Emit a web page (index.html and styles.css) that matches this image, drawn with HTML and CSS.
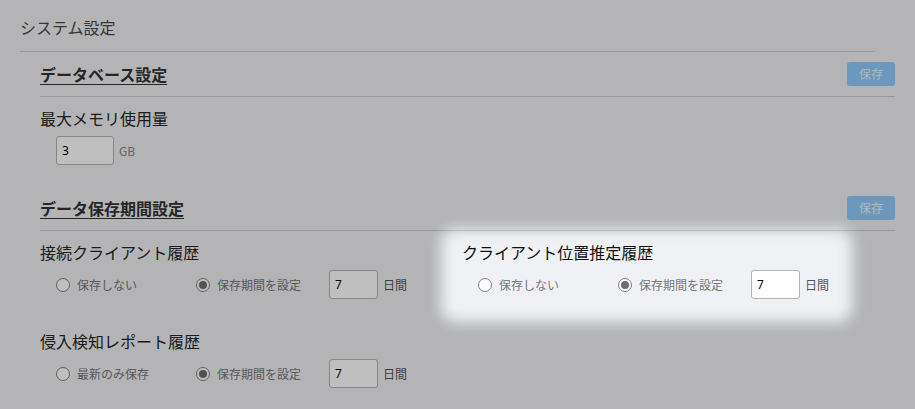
FILE: index.html
```html
<!DOCTYPE html>
<html lang="ja">
<head>
<meta charset="utf-8">
<title>システム設定</title>
<link rel="stylesheet" href="styles.css">
</head>
<body>
<div class="page">
  <div class="title">システム設定</div>

  <section class="section">
    <div class="sec-head">
      <h2 class="sec-title">データベース設定</h2>
      <button class="save" type="button">保存</button>
    </div>
    <div class="group">
      <div class="label">最大メモリ使用量</div>
      <div class="row">
        <input class="num num-wide" type="text" value="3">
        <span class="unit unit-light">GB</span>
      </div>
    </div>
  </section>

  <section class="section">
    <div class="sec-head">
      <h2 class="sec-title">データ保存期間設定</h2>
      <button class="save" type="button">保存</button>
    </div>
    <div class="cols">
      <div class="group">
        <div class="label">接続クライアント履歴</div>
        <div class="row">
          <label class="opt opt-1"><input class="radio" type="radio" name="r1"><span>保存しない</span></label>
          <label class="opt opt-2"><input class="radio" type="radio" name="r1" checked><span>保存期間を設定</span></label>
          <input class="num" type="text" value="7">
          <span class="unit">日間</span>
        </div>
      </div>
      <div class="group">
        <div class="label label-strong">クライアント位置推定履歴</div>
        <div class="row">
          <label class="opt opt-1"><input class="radio" type="radio" name="r2"><span>保存しない</span></label>
          <label class="opt opt-2"><input class="radio" type="radio" name="r2" checked><span>保存期間を設定</span></label>
          <input class="num" type="text" value="7">
          <span class="unit">日間</span>
        </div>
      </div>
      <div class="group">
        <div class="label">侵入検知レポート履歴</div>
        <div class="row">
          <label class="opt opt-1"><input class="radio" type="radio" name="r3"><span>最新のみ保存</span></label>
          <label class="opt opt-2"><input class="radio" type="radio" name="r3" checked><span>保存期間を設定</span></label>
          <input class="num" type="text" value="7">
          <span class="unit">日間</span>
        </div>
      </div>
    </div>
  </section>
</div>
<div class="spotlight"></div>
</body>
</html>
```

FILE: styles.css
```css
html, body {
  margin: 0;
  padding: 0;
  height: 100%;
  overflow: hidden;
}

body {
  position: relative;
  background: #f0f1f5;
  font-family: "Noto Sans CJK JP", "Noto Sans", sans-serif;
  color: #222;
}

.page {
  padding-left: 20px;
}

.title {
  width: 855px;
  height: 34px;
  padding-top: 17px;
  font-size: 16px;
  line-height: 20px;
  color: #4a4a4a;
  border-bottom: 1px solid #cbccd1;
}

.section {
  margin-left: 20px;
  width: 855px;
}

.sec-head {
  height: 44px;
  display: flex;
  align-items: center;
  justify-content: space-between;
  border-bottom: 1px solid #cbccd1;
}

.sec-title {
  margin: 0;
  font-size: 16px;
  line-height: 20px;
  font-weight: bold;
  color: #333;
  text-decoration: underline;
  text-decoration-thickness: 1px;
  text-underline-offset: 3px;
}

.save {
  width: 48px;
  height: 24px;
  padding: 0;
  border: none;
  border-radius: 3px;
  background: #8fcbfb;
  color: #e8f4fd;
  font-family: inherit;
  font-size: 12px;
  line-height: 24px;
}

.cols {
  display: grid;
  grid-template-columns: 422px 1fr;
}

.group {
  padding: 11px 0 21px;
}

.label {
  font-size: 16px;
  line-height: 20px;
  color: #262626;
}

.label-strong {
  color: #111;
}

.row {
  margin-top: 8px;
  height: 29px;
  padding-left: 16px;
  display: flex;
  align-items: center;
}

.opt {
  display: flex;
  align-items: center;
  gap: 7px;
  font-size: 12px;
  color: #767676;
}

.opt-1 {
  width: 140px;
}

.opt-2 {
  width: 133px;
}

.radio {
  appearance: none;
  -webkit-appearance: none;
  margin: 0;
  width: 14px;
  height: 14px;
  border: 1px solid #7f7f7f;
  border-radius: 50%;
  background: #fff;
  box-sizing: border-box;
  position: relative;
  flex: none;
}

.radio:checked::after {
  content: "";
  position: absolute;
  left: 2px;
  top: 2px;
  width: 8px;
  height: 8px;
  border-radius: 50%;
  background: #6e6e6e;
}

.num {
  width: 49px;
  height: 29px;
  box-sizing: border-box;
  margin: 0;
  padding: 0 5px;
  border: 1px solid #b4b4b4;
  border-radius: 3px;
  background: #fff;
  font-family: "Noto Sans", "Noto Sans CJK JP", sans-serif;
  font-size: 12px;
  color: #000;
}

.num-wide {
  width: 58px;
}

.unit {
  margin-left: 5px;
  font-size: 12px;
  color: #555;
}

.unit-light {
  color: #888;
}

.spotlight {
  position: absolute;
  left: 441px;
  top: 229px;
  width: 411px;
  height: 93px;
  border-radius: 14px;
  box-shadow: 0 0 0 1600px rgba(0, 0, 0, 0.25);
  filter: blur(7px);
  pointer-events: none;
}
```
